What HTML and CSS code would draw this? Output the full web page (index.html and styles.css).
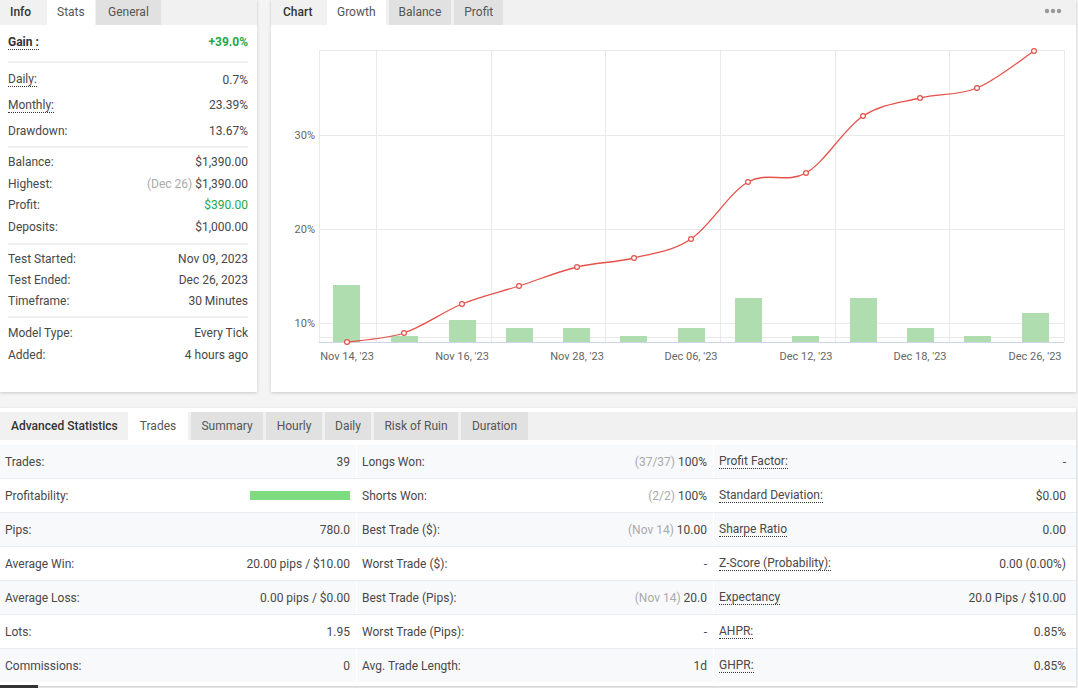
FILE: index.html
```html
<!DOCTYPE html>
<html>
<head>
<meta charset="utf-8">
<link rel="stylesheet" href="styles.css">
</head>
<body>
<div class="page">
  <div class="top">
    <div class="panel side">
      <div class="tabbar">
        <div class="tab tab-title">Info</div>
        <div class="tab tab-active">Stats</div>
        <div class="tab tab-gray">General</div>
      </div>
      <div class="stats">
        <div class="group g-gain">
          <div class="srow"><span class="lbl strong dotted">Gain :</span><span class="val green strong">+39.0%</span></div>
        </div>
        <div class="group g-rates">
          <div class="srow tall"><span class="lbl dotted">Daily:</span><span class="val">0.7%</span></div>
          <div class="srow tall"><span class="lbl dotted">Monthly:</span><span class="val">23.39%</span></div>
          <div class="srow tall"><span class="lbl">Drawdown:</span><span class="val">13.67%</span></div>
        </div>
        <div class="group g-money">
          <div class="srow"><span class="lbl">Balance:</span><span class="val">$1,390.00</span></div>
          <div class="srow"><span class="lbl">Highest:</span><span class="val"><span class="muted">(Dec 26)</span> $1,390.00</span></div>
          <div class="srow"><span class="lbl">Profit:</span><span class="val green">$390.00</span></div>
          <div class="srow"><span class="lbl">Deposits:</span><span class="val">$1,000.00</span></div>
        </div>
        <div class="group g-test">
          <div class="srow"><span class="lbl">Test Started:</span><span class="val">Nov 09, 2023</span></div>
          <div class="srow"><span class="lbl">Test Ended:</span><span class="val">Dec 26, 2023</span></div>
          <div class="srow"><span class="lbl">Timeframe:</span><span class="val">30 Minutes</span></div>
        </div>
        <div class="group g-last">
          <div class="srow"><span class="lbl">Model Type:</span><span class="val">Every Tick</span></div>
          <div class="srow"><span class="lbl">Added:</span><span class="val">4 hours ago</span></div>
        </div>
      </div>
    </div>

    <div class="panel chart-panel">
      <div class="tabbar">
        <div class="tab tab-title chart-title">Chart</div>
        <div class="tab tab-active">Growth</div>
        <div class="tab tab-gray">Balance</div>
        <div class="tab tab-gray">Profit</div>
        <div class="more">
          <svg width="18" height="6" viewBox="0 0 18 6"><circle cx="3" cy="3" r="2.2" fill="#999"/><circle cx="9" cy="3" r="2.2" fill="#999"/><circle cx="15" cy="3" r="2.2" fill="#999"/></svg>
        </div>
      </div>
      <svg class="chart" width="805" height="367" viewBox="271 25 805 367">
        <g stroke="#e9e9e9" stroke-width="1">
          <line x1="319" y1="50.5" x2="1064" y2="50.5"/>
          <line x1="319" y1="135.5" x2="1064" y2="135.5"/>
          <line x1="319" y1="229.5" x2="1064" y2="229.5"/>
          <line x1="319" y1="323.5" x2="1064" y2="323.5"/>
          <line x1="319" y1="337.5" x2="1064" y2="337.5"/>
          <line x1="319.5" y1="50" x2="319.5" y2="342"/>
          <line x1="376.5" y1="50" x2="376.5" y2="342"/>
          <line x1="491.5" y1="50" x2="491.5" y2="342"/>
          <line x1="605.5" y1="50" x2="605.5" y2="342"/>
          <line x1="720.5" y1="50" x2="720.5" y2="342"/>
          <line x1="835.5" y1="50" x2="835.5" y2="342"/>
          <line x1="949.5" y1="50" x2="949.5" y2="342"/>
          <line x1="1064.5" y1="50" x2="1064.5" y2="342"/>
        </g>
        <g fill="#b0ddb0">
          <rect x="333" y="285" width="27" height="57"/>
          <rect x="391" y="336" width="27" height="6"/>
          <rect x="449" y="320" width="27" height="22"/>
          <rect x="506" y="328" width="27" height="14"/>
          <rect x="563" y="328" width="27" height="14"/>
          <rect x="620" y="336" width="27" height="6"/>
          <rect x="678" y="328" width="27" height="14"/>
          <rect x="735" y="298" width="27" height="44"/>
          <rect x="792" y="336" width="27" height="6"/>
          <rect x="850" y="298" width="27" height="44"/>
          <rect x="907" y="328" width="27" height="14"/>
          <rect x="964" y="336" width="27" height="6"/>
          <rect x="1022" y="313" width="27" height="29"/>
        </g>
        <line x1="319" y1="342.5" x2="1064" y2="342.5" stroke="#ccd6eb" stroke-width="1"/>
        <path fill="none" stroke="#e4524a" stroke-width="1.3" d="M347 342 C356.5 340.5 384.8 339.3 404 333 C423.2 326.7 442.8 311.8 462 304 C481.2 296.2 499.8 292.2 519 286 C538.2 279.8 557.8 271.7 577 267 C596.2 262.3 615 262.7 634 258 C653 253.3 672 251.7 691 239 C710 226.3 728.8 193 748 182 C767.2 171 786.8 184 806 173 C825.2 162 844 128.5 863 116 C882 103.5 901 102.7 920 98 C939 93.3 958 95.8 977 88 C996 80.2 1024.5 57.2 1034 51"/>
        <g fill="#fff" stroke="#e4524a" stroke-width="1.2">
          <circle cx="347" cy="342" r="2.4"/>
          <circle cx="404" cy="333" r="2.4"/>
          <circle cx="462" cy="304" r="2.4"/>
          <circle cx="519" cy="286" r="2.4"/>
          <circle cx="577" cy="267" r="2.4"/>
          <circle cx="634" cy="258" r="2.4"/>
          <circle cx="691" cy="239" r="2.4"/>
          <circle cx="748" cy="182" r="2.4"/>
          <circle cx="806" cy="173" r="2.4"/>
          <circle cx="863" cy="116" r="2.4"/>
          <circle cx="920" cy="98" r="2.4"/>
          <circle cx="977" cy="88" r="2.4"/>
          <circle cx="1034" cy="51" r="2.4"/>
        </g>
        <g class="axis-label" text-anchor="end">
          <text x="315" y="139">30%</text>
          <text x="315" y="233">20%</text>
          <text x="315" y="327">10%</text>
        </g>
        <g class="axis-label" text-anchor="middle">
          <text x="347" y="360">Nov 14, '23</text>
          <text x="462" y="360">Nov 16, '23</text>
          <text x="577" y="360">Nov 28, '23</text>
          <text x="691" y="360">Dec 06, '23</text>
          <text x="806" y="360">Dec 12, '23</text>
          <text x="920" y="360">Dec 18, '23</text>
          <text x="1035" y="360">Dec 26, '23</text>
        </g>
      </svg>
    </div>
  </div>

  <div class="panel bottom">
    <div class="bottom-head">
      <div class="tabbar tabbar-tall">
        <div class="tab tab-title">Advanced Statistics</div>
        <div class="tab tab-active t-trades">Trades</div>
        <div class="tab tab-gray t-summary">Summary</div>
        <div class="tab tab-gray t-hourly">Hourly</div>
        <div class="tab tab-gray t-daily">Daily</div>
        <div class="tab tab-gray t-risk">Risk of Ruin</div>
        <div class="tab tab-gray t-duration">Duration</div>
      </div>
    </div>
    <div class="table">
      <div class="trow odd">
        <div class="cell"><span>Trades:</span><span>39</span></div>
        <div class="cell"><span>Longs Won:</span><span><span class="muted">(37/37)</span> 100%</span></div>
        <div class="cell wide"><span class="dotted">Profit Factor:</span><span>-</span></div>
      </div>
      <div class="trow">
        <div class="cell"><span>Profitability:</span><span class="pbar"></span></div>
        <div class="cell"><span>Shorts Won:</span><span><span class="muted">(2/2)</span> 100%</span></div>
        <div class="cell wide"><span class="dotted">Standard Deviation:</span><span>$0.00</span></div>
      </div>
      <div class="trow odd">
        <div class="cell"><span>Pips:</span><span>780.0</span></div>
        <div class="cell"><span>Best Trade ($):</span><span><span class="muted">(Nov 14)</span> 10.00</span></div>
        <div class="cell wide"><span class="dotted">Sharpe Ratio</span><span>0.00</span></div>
      </div>
      <div class="trow">
        <div class="cell"><span>Average Win:</span><span>20.00 pips / $10.00</span></div>
        <div class="cell"><span>Worst Trade ($):</span><span>-</span></div>
        <div class="cell wide"><span class="dotted">Z-Score (Probability):</span><span>0.00 (0.00%)</span></div>
      </div>
      <div class="trow odd">
        <div class="cell"><span>Average Loss:</span><span>0.00 pips / $0.00</span></div>
        <div class="cell"><span>Best Trade (Pips):</span><span><span class="muted">(Nov 14)</span> 20.0</span></div>
        <div class="cell wide"><span class="dotted">Expectancy</span><span>20.0 Pips / $10.00</span></div>
      </div>
      <div class="trow">
        <div class="cell"><span>Lots:</span><span>1.95</span></div>
        <div class="cell"><span>Worst Trade (Pips):</span><span>-</span></div>
        <div class="cell wide"><span class="dotted">AHPR:</span><span>0.85%</span></div>
      </div>
      <div class="trow odd last">
        <div class="cell"><span>Commissions:</span><span>0</span></div>
        <div class="cell"><span>Avg. Trade Length:</span><span>1d</span></div>
        <div class="cell wide"><span class="dotted">GHPR:</span><span>0.85%</span></div>
      </div>
    </div>
  </div>
  <div class="scrollmark"></div>
</div>
</body>
</html>
```

FILE: styles.css
```css
html, body {
  margin: 0;
  padding: 0;
}
body {
  background: #f4f4f4;
  font-family: Roboto, "Liberation Sans", Arial, sans-serif;
  font-size: 12px;
  color: #484848;
  width: 1078px;
  height: 688px;
  overflow: hidden;
}
.page {
  position: relative;
  width: 1076px;
  height: 688px;
}
.top {
  display: flex;
  gap: 14px;
  height: 392px;
}
.panel {
  background: #fff;
  box-shadow: 0 1px 3px rgba(0, 0, 0, 0.18);
}
.side {
  width: 257px;
  flex: none;
}
.chart-panel {
  flex: 1;
  display: flex;
  flex-direction: column;
}
.tabbar {
  display: flex;
  height: 25px;
  background: #f1f1f1;
  align-items: stretch;
}
.tab {
  line-height: 25px;
  padding: 0 10px;
  color: #555;
  white-space: nowrap;
}
.tab-title {
  color: #333;
  font-weight: 500;
}
.tab-active {
  background: #fff;
  color: #555;
}
.tab-gray {
  background: #e1e1e1;
  color: #555;
  margin-left: 3px;
}
.side .tab-title { width: 27px; }
.side .tab-active { width: 28px; padding: 0 10px; }
.side .tab-gray { margin-left: 1px; padding: 0 12px 0 12px; }
.chart-title { padding: 0 12px; width: 32px; }
.more {
  margin-left: auto;
  padding: 0 14px 0 0;
  display: flex;
  align-items: center;
  margin-top: -3px;
}
.chart {
  display: block;
}
.axis-label {
  font-family: Roboto, "Liberation Sans", Arial, sans-serif;
  font-size: 11px;
  fill: #666;
}

/* stats list */
.stats {
  padding: 0 9px 0 8px;
}
.group {
  border-bottom: 2px solid #f0f0f0;
}
.g-gain { padding: 6px 0 8px; }
.g-rates { padding: 4px 0 2px; }
.g-money { padding: 4px 0 5px; }
.g-test { padding: 4px 0 4px; }
.g-last { padding: 5px 0 0; border-bottom: none; }
.srow {
  display: flex;
  justify-content: space-between;
  align-items: center;
  height: 21.5px;
}
.g-gain .srow { height: 22px; }
.srow.tall { height: 25.5px; }
.g-test .srow { height: 21px; }
.g-last .srow { height: 21.5px; }
.strong { font-weight: 700; color: #333; }
.green { color: #23a847; }
.muted { color: #aaa; }
.dotted {
  border-bottom: 1px dotted #333;
  line-height: 14px;
}

/* bottom panel */
.bottom {
  margin-top: 16px;
  height: 278px;
}
.bottom-head {
  padding-top: 4px;
  background: #fff;
}
.tabbar-tall {
  height: 28px;
}
.tabbar-tall .tab {
  line-height: 28px;
}
.bottom .tab-title { padding: 0 11px; width: 103px; }
.bottom .tab-active,
.bottom .tab-gray {
  padding: 0;
  margin-left: 3px;
  text-align: center;
}
.t-trades { width: 60px; }
.t-summary { width: 72px; }
.t-hourly { width: 56px; }
.t-daily { width: 46px; }
.t-risk { width: 84px; }
.t-duration { width: 67px; }
.table {
  padding-top: 5px;
}
.trow {
  display: grid;
  grid-template-columns: 357px 357px 1fr;
  height: 33px;
  border-bottom: 1px solid #e8ebef;
  background: #fff;
}
.trow.odd {
  background: #f8f9fb;
}
.trow.last {
  border-bottom: none;
}
.cell {
  display: flex;
  justify-content: space-between;
  align-items: center;
  padding: 0 6px 0 5px;
  border-right: 1px solid #fff;
}
.cell.wide {
  padding: 0 10px 0 5px;
  border-right: none;
}
.pbar {
  display: inline-block;
  width: 100px;
  height: 9px;
  background: #7fdb7f;
}
.scrollmark {
  position: absolute;
  left: 0;
  bottom: 0;
  width: 38px;
  height: 3px;
  background: #333;
}
```
